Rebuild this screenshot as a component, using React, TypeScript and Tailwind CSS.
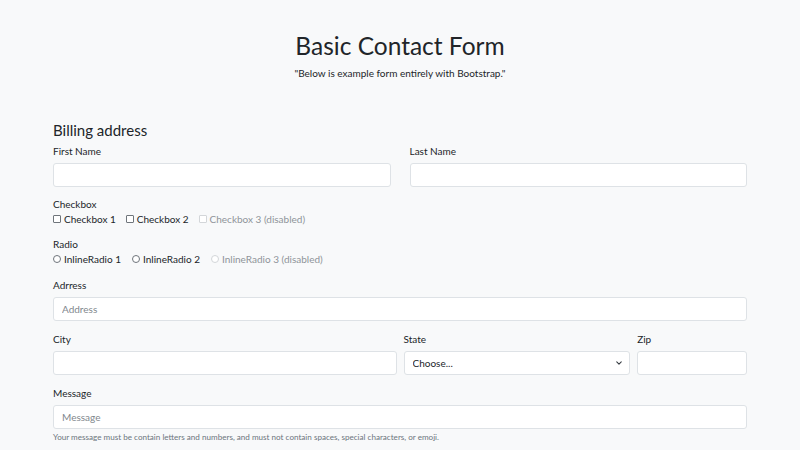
import React from "react";

const inputCls =
  "block w-full h-[24px] bg-white border border-[#dee2e6] rounded-[3px] px-[8px] text-[10px] text-[#212529] placeholder:text-[#81878d] outline-none";

function Label({ children, className = "" }: { children: React.ReactNode; className?: string }) {
  return <div className={"text-[10px] leading-[14px] text-[#212529] " + className}>{children}</div>;
}

function Check({ label, disabled, radio }: { label: string; disabled?: boolean; radio?: boolean }) {
  return (
    <span className={"flex items-center gap-[3px] " + (disabled ? "text-[#8f9499]" : "text-[#212529]")}>
      <span
        className={
          "inline-block w-[8px] h-[8px] bg-white border " +
          (radio ? "rounded-full " : "rounded-[1px] ") +
          (disabled ? "border-[#d3d6d9]" : "border-[#6f757b]")
        }
      />
      <span>{label}</span>
    </span>
  );
}

export default function App() {
  return (
    <div className="min-h-[450px] w-full bg-[#f8f9fa] text-[#212529]" style={{ fontFamily: 'Lato, sans-serif' }}>
      <div className="mx-auto w-[694px] pt-[29px]">
        <div className="text-center text-[24.5px] leading-[34px] font-normal text-[#212529]">Basic Contact Form</div>
        <div className="mt-[2px] text-center text-[10px] leading-[16px]">"Below is example form entirely with Bootstrap."</div>

        <div className="mt-[39px] text-[15px] leading-[20px]">Billing address</div>

        <div className="mt-[4px] flex gap-[19px]">
          <div className="flex-1">
            <Label className="mb-[5px]">First Name</Label>
            <input className={inputCls} />
          </div>
          <div className="flex-1">
            <Label className="mb-[5px]">Last Name</Label>
            <input className={inputCls} />
          </div>
        </div>

        <Label className="mt-[10px]">Checkbox</Label>
        <div className="mt-[1px] flex gap-[10px] text-[10px] leading-[14px]">
          <Check label="Checkbox 1" />
          <Check label="Checkbox 2" />
          <Check label="Checkbox 3 (disabled)" disabled />
        </div>

        <Label className="mt-[11px]">Radio</Label>
        <div className="mt-[1px] flex gap-[11px] text-[10px] leading-[14px]">
          <Check label="InlineRadio 1" radio />
          <Check label="InlineRadio 2" radio />
          <Check label="InlineRadio 3 (disabled)" radio disabled />
        </div>

        <Label className="mt-[12px] mb-[5px]">Adrress</Label>
        <input className={inputCls} placeholder="Address" />

        <div className="mt-[11px] grid grid-cols-12 gap-x-[7px]">
          <div className="col-span-6">
            <Label className="mb-[5px]">City</Label>
            <input className={inputCls} />
          </div>
          <div className="col-span-4">
            <Label className="mb-[5px]">State</Label>
            <div className="relative">
              <select className={inputCls + " appearance-none pr-[20px]"} defaultValue="">
                <option value="">Choose...</option>
              </select>
              <svg className="pointer-events-none absolute right-[8px] top-[10px]" width="6" height="4" viewBox="0 0 16 10" fill="none">
                <path d="M2 2l6 6 6-6" stroke="#343a40" strokeWidth="2.8" strokeLinecap="round" strokeLinejoin="round" />
              </svg>
            </div>
          </div>
          <div className="col-span-2">
            <Label className="mb-[5px]">Zip</Label>
            <input className={inputCls} />
          </div>
        </div>

        <Label className="mt-[11px] mb-[5px]">Message</Label>
        <input className={inputCls} placeholder="Message" />
        <div className="mt-[2px] text-[8.1px] leading-[12px] text-[#6c757d]">
          Your message must be contain letters and numbers, and must not contain spaces, special characters, or emoji.
        </div>
      </div>
    </div>
  );
}
